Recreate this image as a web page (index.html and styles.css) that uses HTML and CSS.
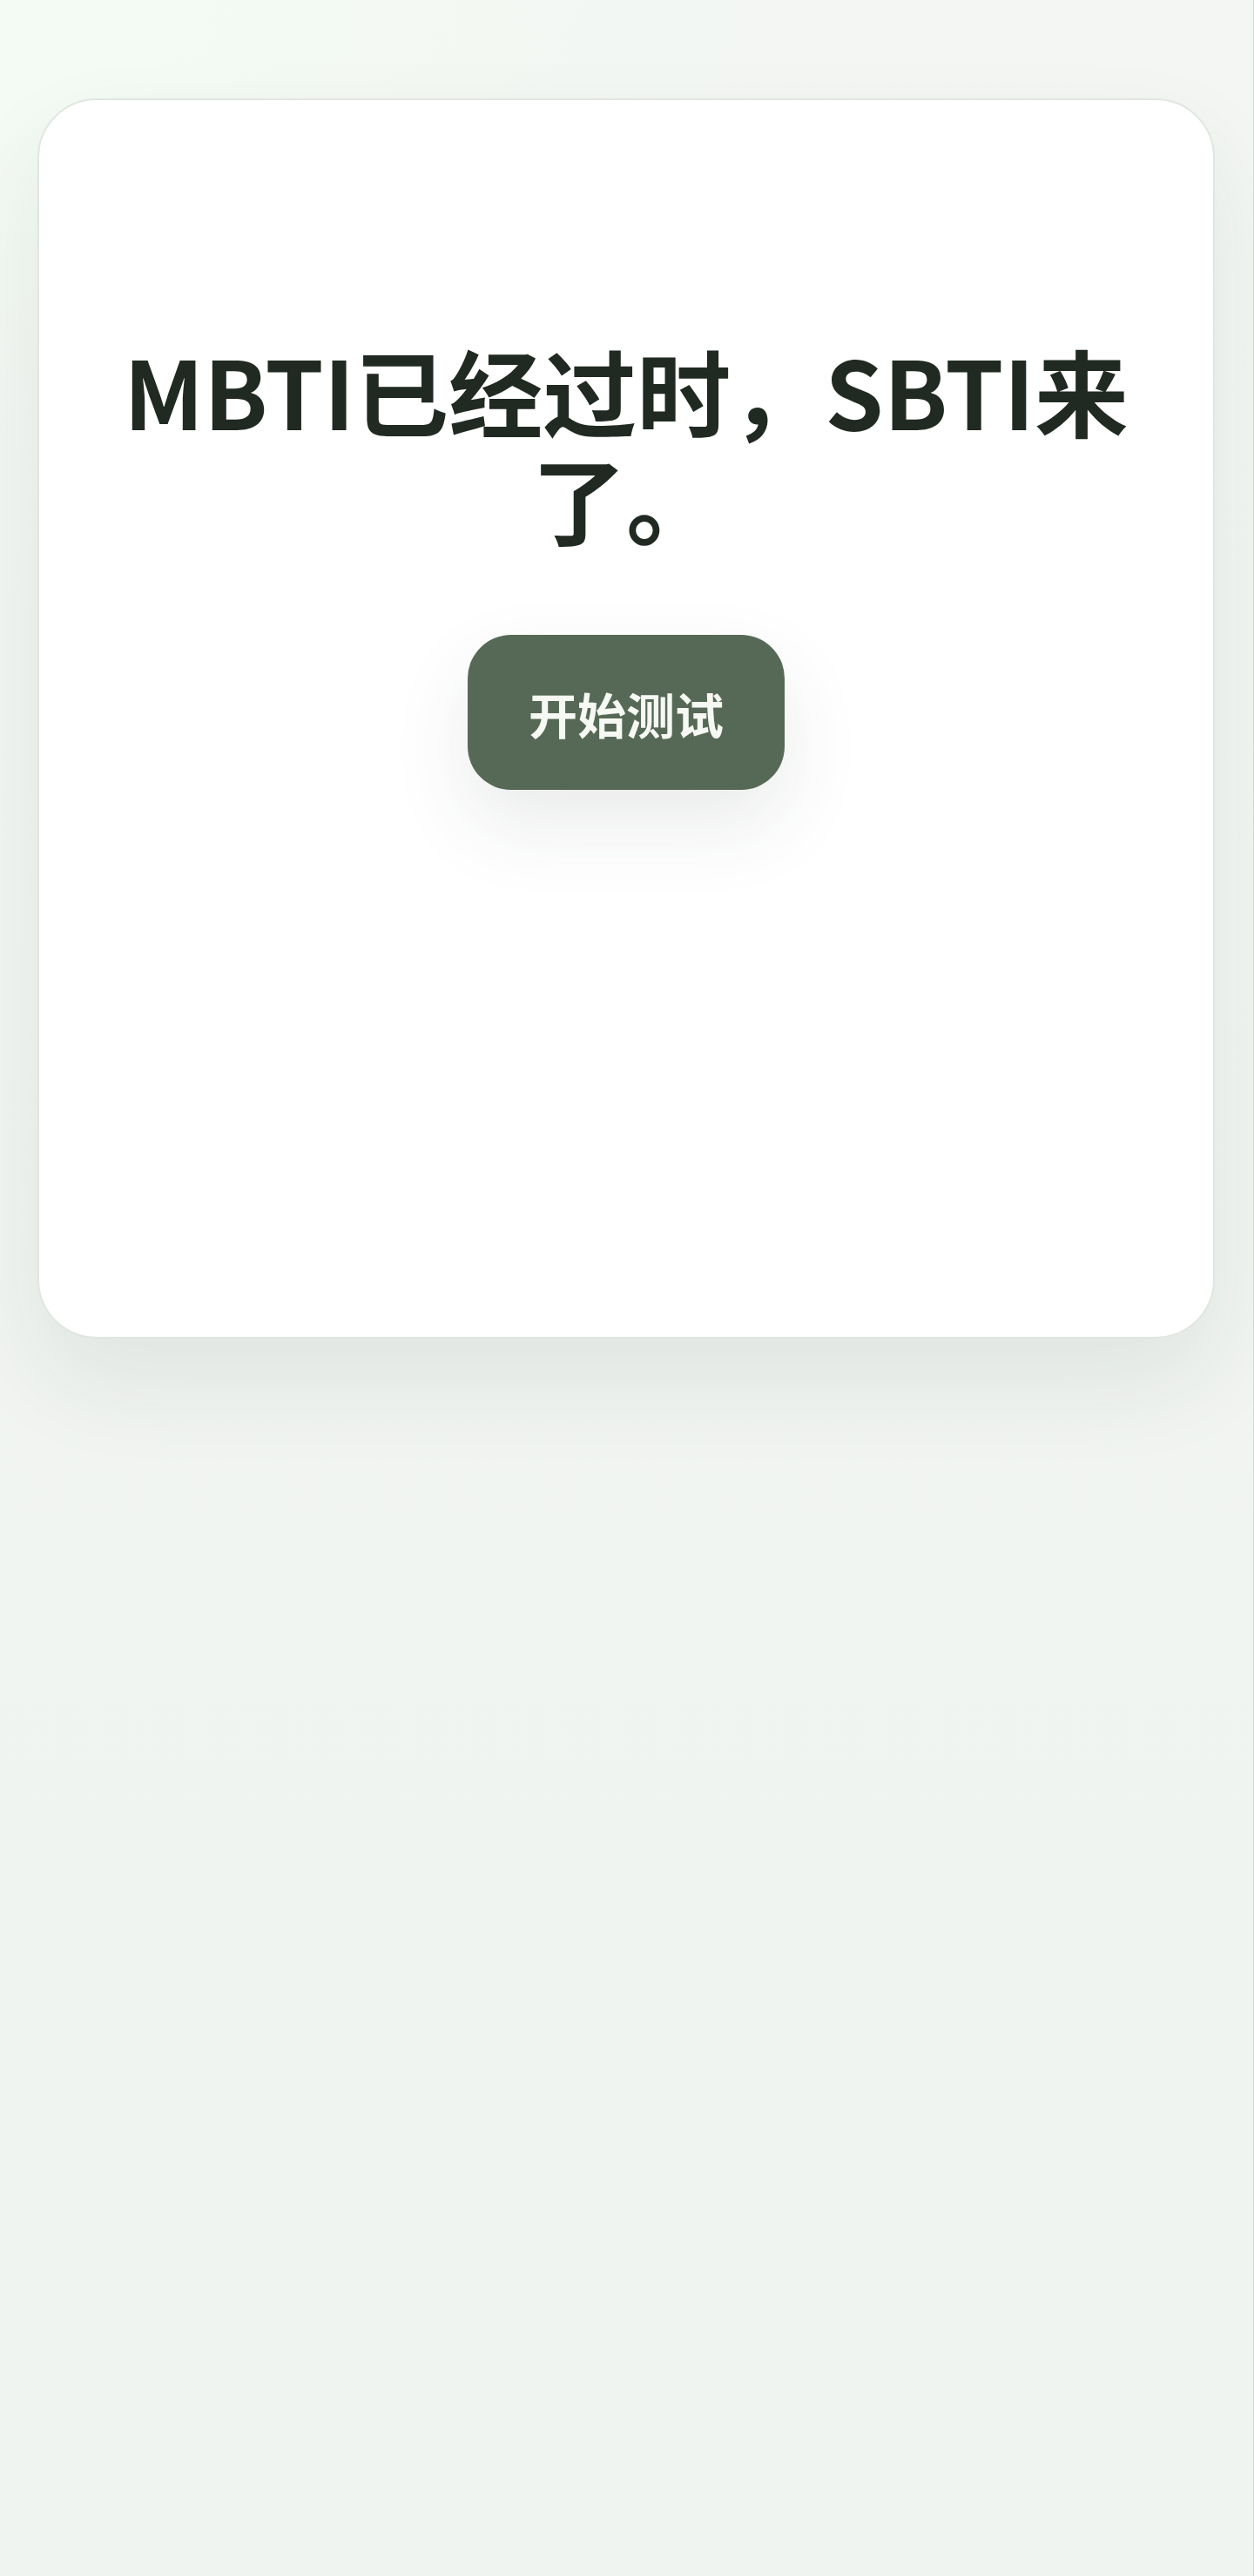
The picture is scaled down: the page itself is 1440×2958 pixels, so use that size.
FILE: index.html
```html
<!DOCTYPE html>
<html lang="zh-CN">
<head>
<meta charset="utf-8">
<title>SBTI</title>
<link rel="stylesheet" href="styles.css">
</head>
<body>
<main class="page">
  <section class="card">
    <h1 class="title">MBTI已经过时，SBTI来了。</h1>
    <button class="start-btn" type="button">开始测试</button>
  </section>
</main>
</body>
</html>
```

FILE: styles.css
```css
html, body {
  margin: 0;
  padding: 0;
}
body {
  min-height: 2958px;
  font-family: "Noto Sans CJK SC", "Noto Sans", sans-serif;
  background: radial-gradient(ellipse 900px 500px at 0 0, #f4fbf4 0%, rgba(244,251,244,0) 100%),
              linear-gradient(180deg, #f3f6f3 0%, #f1f4f1 50%, #eff4f0 100%);
  box-shadow: inset -1px 0 0 #d6dad6;
  color: #212a22;
}
.page {
  padding: 113px 45px 0 43px;
}
.card {
  box-sizing: border-box;
  min-height: 1424px;
  background: #ffffff;
  border: 2px solid #e0e6e0;
  border-radius: 68px;
  box-shadow: 0 50px 110px rgba(40, 60, 45, 0.08);
  padding: 270px 60px 0;
  display: flex;
  flex-direction: column;
  align-items: center;
}
.title {
  margin: 0;
  max-width: 1160px;
  font-size: 108px;
  line-height: 1.15;
  font-weight: 700;
  text-align: center;
  color: #212a22;
}
.start-btn {
  margin-top: 96px;
  width: 364px;
  height: 178px;
  border: none;
  border-radius: 50px;
  background: #566956;
  color: #f6f8f3;
  font-family: "Noto Sans CJK SC", "Noto Sans", sans-serif;
  font-size: 56px;
  font-weight: 700;
  box-shadow: 0 40px 90px rgba(40, 60, 45, 0.10);
  cursor: pointer;
}
```
